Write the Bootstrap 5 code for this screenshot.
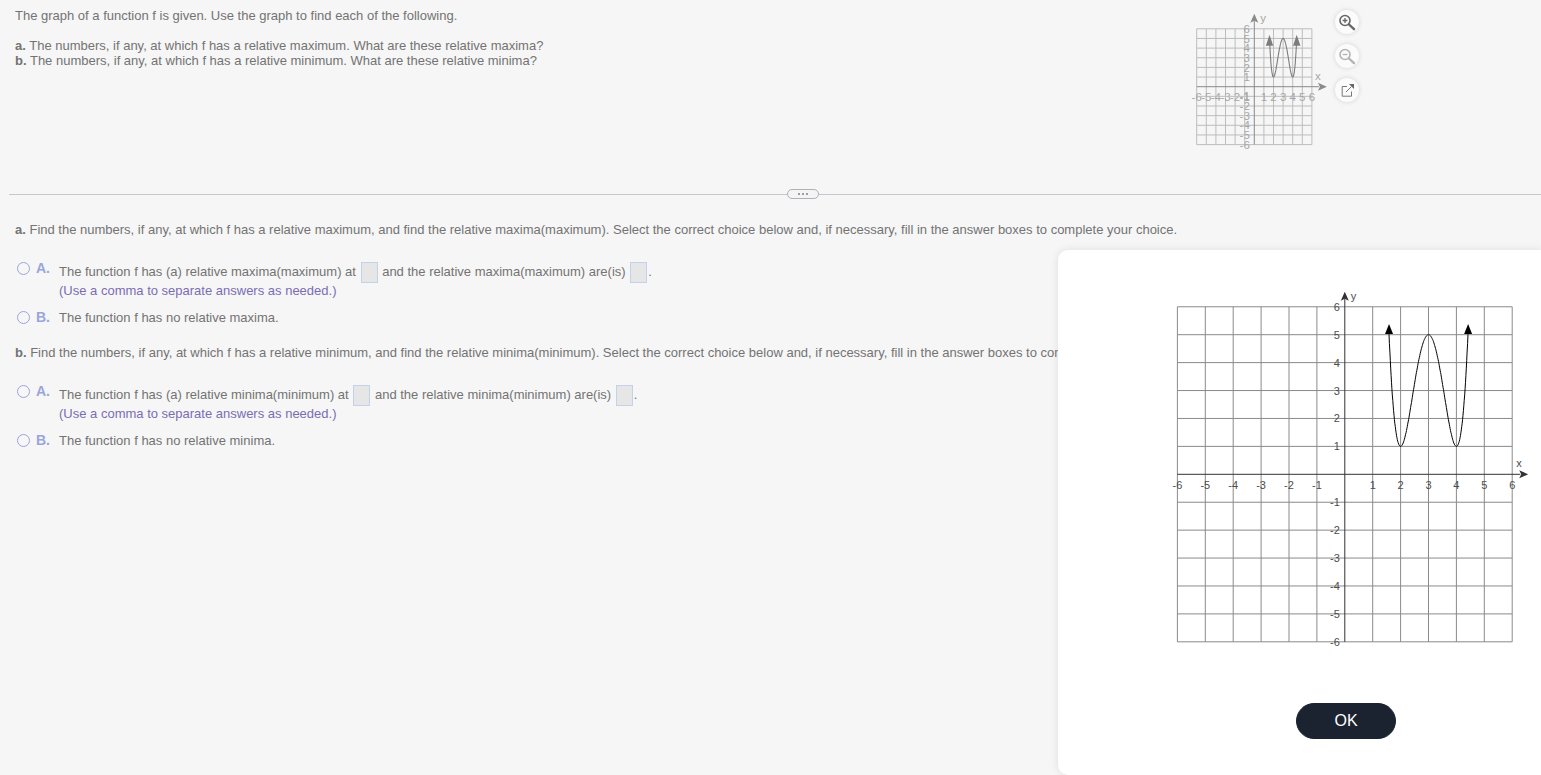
<!DOCTYPE html>
<html lang="en">

<head>
    <meta charset="UTF-8">
    <meta name="viewport" content="width=device-width, initial-scale=1.0">
    <link href="https://cdn.jsdelivr.net/npm/bootstrap@5.3.1/dist/css/bootstrap.min.css" rel="stylesheet">
    <title>Relative maxima and minima</title>

    <style>
        body {
            font-family: "Liberation Sans", Arial, sans-serif;
            font-size: 13px;
            line-height: 16px;
            color: #737373;
            background-color: #f6f6f6;
            height: 775px;
            overflow: hidden;
        }

        .top-pane {
            height: 195px;
            margin-left: 9px;
            border-bottom: 1px solid #c6c6ce;
        }

        .prompt-text {
            padding: 8px 0 0 6px;
            width: 1180px;
            flex: none;
        }

        .prompt-text p {
            margin: 0 0 14px;
        }

        .prompt-text div {
            line-height: 15px;
        }

        .preview-graph {
            margin-top: 5px;
            width: 160px;
            height: 160px;
            flex: none;
        }

        .zoom-tools {
            width: 24px;
            margin: 9.5px 0 0 -14.5px;
            gap: 10px;
        }

        .zoom-btn {
            width: 24px;
            height: 24px;
            border-radius: 50%;
            background-color: #fbfbfb;
            box-shadow: 0 0 5px rgba(0, 0, 0, .14);
        }

        .pane-handle {
            position: absolute;
            left: 778px;
            top: 189px;
            width: 32px;
            height: 10px;
            border: 1px solid #aeb2b8;
            border-radius: 5px;
            background-color: #f4f4f4;
            gap: 2px;
        }

        .pane-handle i {
            width: 2px;
            height: 2px;
            background-color: #9a9ea4;
        }

        .answer-pane {
            padding: 27px 0 0 15px;
            white-space: nowrap;
        }

        .answer-pane p {
            margin: 0;
        }

        .choice-list {
            margin: 22px 0 18px;
        }

        .choice-row {
            margin-bottom: 6px;
        }

        .choice-radio {
            width: 13px;
            height: 13px;
            margin: 1.5px 6px 0 2px;
            border: 1.5px solid #98a6dc;
            border-radius: 50%;
            flex: none;
        }

        .choice-letter {
            width: 23px;
            font-size: 14px;
            font-weight: 700;
            color: #98a6dc;
            flex: none;
        }

        .choice-row:last-child .choice-radio {
            margin-top: 4.5px;
        }

        .choice-row:last-child .choice-letter {
            margin-top: 3px;
        }

        .choice-body {
            line-height: 19px;
            padding-top: 2px;
        }

        .answer-box {
            display: inline-block;
            width: 17px;
            height: 21px;
            margin: -2px 1px;
            vertical-align: middle;
            background-color: #e6e6e6;
            border: 1px solid #c3d2ea;
        }

        .hint-text {
            color: #7a6db3;
        }

        .graph-dialog {
            position: absolute;
            left: 1058px;
            top: 250px;
            right: 0;
            bottom: 0;
            padding: 34px 0 0 93px;
            background-color: #fff;
            border-radius: 10px 0 0 10px;
            box-shadow: 0 0 8px rgba(0, 0, 0, .1);
        }

        .full-graph {
            width: 368px;
            height: 366px;
            flex: none;
        }

        .ok-btn {
            width: 100px;
            height: 36px;
            margin-top: 53px;
            padding: 0;
            font-size: 16px;
            color: #fff;
            background-color: #1c2330;
            border-color: #1c2330;
        }
    </style>
</head>

<body>
    <div class="top-pane d-flex position-relative">
        <div class="prompt-text">
            <p>The graph of a function f is given. Use the graph to find each of the following.</p>
            <div><b>a.</b> The numbers, if any, at which f has a relative maximum. What are these relative maxima?</div>
            <div><b>b.</b> The numbers, if any, at which f has a relative minimum. What are these relative minima?</div>
        </div>
        <svg class="preview-graph" id="previewGraph" viewBox="0 0 160 160"></svg>
        <div class="zoom-tools d-flex flex-column">
            <div class="zoom-btn d-flex align-items-center justify-content-center">
                <svg width="18" height="18" viewBox="0 0 18 18" fill="none" stroke="#666" stroke-width="1.6">
                    <circle cx="7" cy="7.5" r="5" />
                    <path d="M4.6 7.5h4.8M7 5.1v4.8" stroke-width="1.3" />
                    <path d="M11 11.5L16 16.2" stroke-width="2.4" stroke-linecap="round" />
                </svg>
            </div>
            <div class="zoom-btn d-flex align-items-center justify-content-center">
                <svg width="18" height="18" viewBox="0 0 18 18" fill="none" stroke="#b4b4b4" stroke-width="1.6">
                    <circle cx="7" cy="7.5" r="5" />
                    <path d="M4.6 7.5h4.8" stroke-width="1.3" />
                    <path d="M11 11.5L16 16.2" stroke-width="2.4" stroke-linecap="round" />
                </svg>
            </div>
            <div class="zoom-btn d-flex align-items-center justify-content-center">
                <svg width="16" height="16" viewBox="0 0 16 16" fill="none" stroke="#777" stroke-width="1">
                    <path d="M8 4.5H3.2v9.7h9.3V9.5" />
                    <path d="M7 10L12.5 4.5" />
                    <path d="M10 2h5v5z" fill="#666" stroke="none" />
                </svg>
            </div>
        </div>
        <div class="pane-handle d-flex align-items-center justify-content-center"><i></i><i></i><i></i></div>
    </div>

    <div class="answer-pane">
        <p><b>a.</b> Find the numbers, if any, at which f has a relative maximum, and find the relative maxima(maximum). Select the correct choice below and, if necessary, fill in the answer boxes to complete your choice.</p>
        <div class="choice-list">
            <div class="choice-row d-flex">
                <span class="choice-radio"></span><span class="choice-letter">A.</span>
                <div class="choice-body">The function f has (a) relative maxima(maximum) at <span class="answer-box"></span> and the relative maxima(maximum) are(is) <span class="answer-box"></span>.<br><span class="hint-text">(Use a comma to separate answers as needed.)</span></div>
            </div>
            <div class="choice-row d-flex">
                <span class="choice-radio"></span><span class="choice-letter">B.</span>
                <div class="choice-body">The function f has no relative maxima.</div>
            </div>
        </div>
        <p><b>b.</b> Find the numbers, if any, at which f has a relative minimum, and find the relative minima(minimum). Select the correct choice below and, if necessary, fill in the answer boxes to complete your choice.</p>
        <div class="choice-list">
            <div class="choice-row d-flex">
                <span class="choice-radio"></span><span class="choice-letter">A.</span>
                <div class="choice-body">The function f has (a) relative minima(minimum) at <span class="answer-box"></span> and the relative minima(minimum) are(is) <span class="answer-box"></span>.<br><span class="hint-text">(Use a comma to separate answers as needed.)</span></div>
            </div>
            <div class="choice-row d-flex">
                <span class="choice-radio"></span><span class="choice-letter">B.</span>
                <div class="choice-body">The function f has no relative minima.</div>
            </div>
        </div>
    </div>

    <div class="graph-dialog d-flex flex-column align-items-center">
        <svg class="full-graph" id="fullGraph" viewBox="0 0 368 366"></svg>
        <button type="button" class="btn rounded-pill ok-btn">OK</button>
    </div>

    <script>
        // draws the W shaped function, y = 4(x-2)^2(x-4)^2 + 1
        function drawGraph(id, o) {
            var s = "";
            var i, x, y;
            var left = o.x0 - 6 * o.sx, right = o.x0 + 6 * o.sx;
            var top = o.y0 - 6 * o.sy, bottom = o.y0 + 6 * o.sy;

            for (i = -6; i <= 6; i++) {
                x = o.x0 + i * o.sx;
                y = o.y0 - i * o.sy;
                if (i != 0) {
                    s += "<path d='M" + x + " " + top + "V" + bottom + "M" + left + " " + y + "H" + right + "' stroke='" + o.grid + "' fill='none'/>";
                    s += "<text x='" + x + "' y='" + (o.y0 + o.lx) + "' text-anchor='middle'>" + i + "</text>";
                    s += "<text x='" + (o.x0 - o.ly) + "' y='" + (y + o.fs * 0.36) + "' text-anchor='end'>" + i + "</text>";
                }
            }

            s += "<path d='M" + left + " " + o.y0 + "H" + (right + o.ax - 3) + "M" + o.x0 + " " + bottom + "V" + (top - o.ay + 3) + "' stroke='" + o.axis + "' fill='none'/>";
            s += "<path d='M" + (right + o.ax + 5) + " " + o.y0 + "l-9 -4 2 4 -2 4z' fill='" + o.axis + "'/>";
            s += "<path d='M" + o.x0 + " " + (top - o.ay - 4) + "l-4 9 4 -2 4 2z' fill='" + o.axis + "'/>";
            s += "<text x='" + (right + o.ax - 7) + "' y='" + (o.y0 - 7) + "'>x</text>";
            s += "<text x='" + (o.x0 + 6) + "' y='" + (top - o.ay + 4) + "'>y</text>";

            var pts = [];
            for (i = 0; i <= 190; i++) {
                x = 1.585 + i * 2.83 / 190;
                y = 4 * (x - 2) * (x - 2) * (x - 4) * (x - 4) + 1;
                pts.push((o.x0 + x * o.sx).toFixed(1) + "," + (o.y0 - y * o.sy).toFixed(1));
            }
            s += "<polyline points='" + pts.join(" ") + "' fill='none' stroke='" + o.curve + "' stroke-width='" + o.cw + "'/>";

            [1.585, 4.42].forEach(function (a) {
                var px = o.x0 + a * o.sx, tip = o.y0 - 5.38 * o.sy;
                s += "<path d='M" + px + " " + tip + "L" + (px + o.head) + " " + (tip + o.hl) + "L" + (px - o.head) + " " + (tip + o.hl) + "z' fill='" + o.curve + "'/>";
            });

            var el = document.getElementById(id);
            el.setAttribute("font-family", "Liberation Sans, Arial, sans-serif");
            el.setAttribute("font-size", o.fs);
            el.setAttribute("fill", o.text);
            el.innerHTML = s;
        }

        drawGraph("fullGraph", {
            x0: 182.8, y0: 190.3, sx: 27.9, sy: 27.92, fs: 11, lx: 15, ly: 5, ax: 11, ay: 11,
            grid: "#8a8a8a", axis: "#333", curve: "#000", text: "#4d4d4d", cw: 1, head: 4, hl: 10
        });

        drawGraph("previewGraph", {
            x0: 65.3, y0: 81.7, sx: 9.6, sy: 9.65, fs: 11.5, lx: 14.5, ly: 4.5, ax: 10, ay: 11,
            grid: "#bdbdbd", axis: "#8a8a8a", curve: "#7c7c7c", text: "#a6a6a6", cw: 1.1, head: 3.7, hl: 11
        });
    </script>

    <script src="https://cdn.jsdelivr.net/npm/bootstrap@5.3.1/dist/js/bootstrap.bundle.min.js"></script>
</body>

</html>
